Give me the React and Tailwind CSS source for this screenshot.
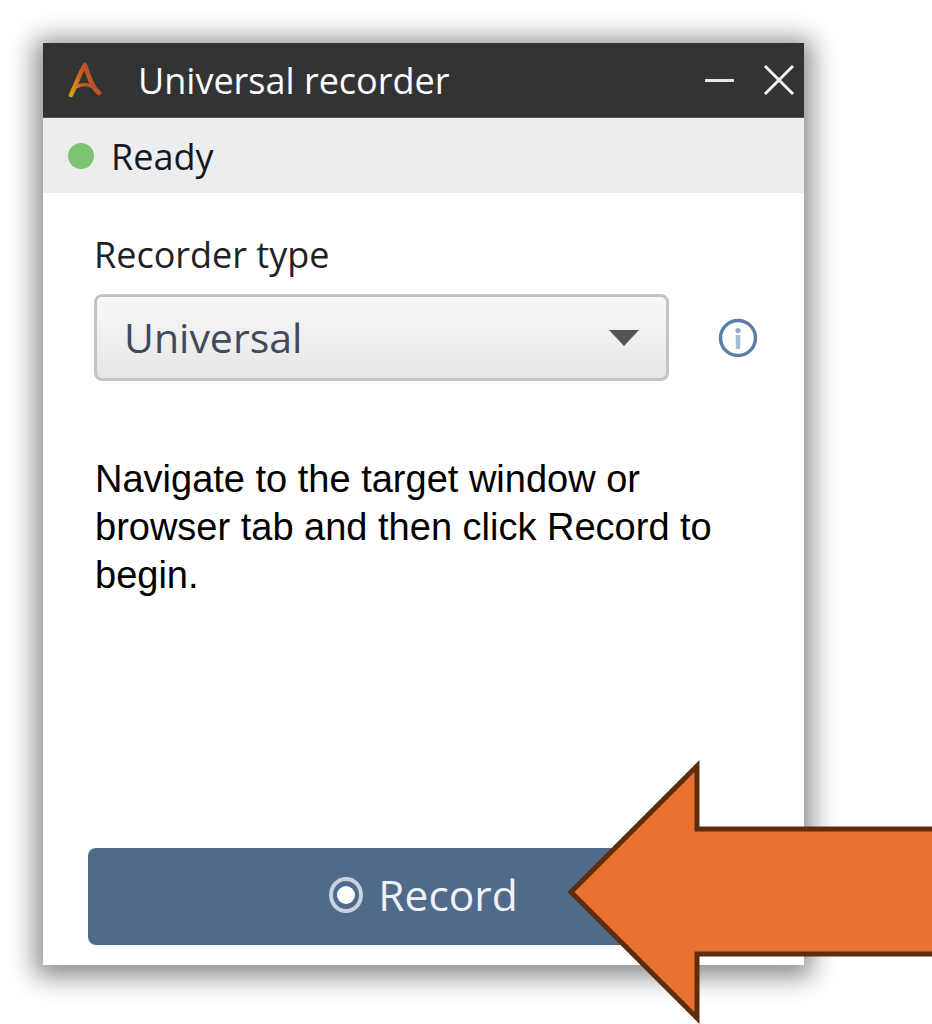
export default function App() {
  return (
    <div className="relative w-[932px] h-[1024px] bg-white overflow-hidden" style={{ fontFamily: '"Open Sans", "Noto Sans", sans-serif' }}>
      <div className="pt-[43px] pl-[43px]">
        <div className="w-[761px] h-[922px] flex flex-col bg-white shadow-[0_4px_24px_8px_rgba(0,0,0,0.45)]">
          <div className="h-[75px] shrink-0 bg-[#333333] flex items-center pl-[25px] pr-[9px] border-b border-[#555555]">
            <svg width="36" height="36" viewBox="0 0 36 36" className="shrink-0" fill="none" strokeLinecap="round" strokeLinejoin="round">
              <defs>
                <linearGradient id="logoGrad" x1="0" y1="1" x2="1" y2="0.5">
                  <stop offset="0" stopColor="#d9a11a" />
                  <stop offset="0.5" stopColor="#c8651e" />
                  <stop offset="1" stopColor="#b8472a" />
                </linearGradient>
              </defs>
              <path d="M3 33C8 23 12 10 17 3C20 12 24 26 31 31" stroke="url(#logoGrad)" strokeWidth="4.5" />
              <path d="M8 25C15 21 23 22 30 29" stroke="url(#logoGrad)" strokeWidth="3.5" />
            </svg>
            <span className="ml-[34px] pt-[2px] text-[36px] leading-none text-white">Universal recorder</span>
            <div className="ml-auto flex items-center gap-[29px]">
              <div className="w-[29px] h-[3px] bg-[#e4e4e4]" />
              <svg width="32" height="32" viewBox="0 0 32 32" stroke="#f2f2f2" strokeWidth="3">
                <path d="M2 2L30 30M30 2L2 30" />
              </svg>
            </div>
          </div>
          <div className="h-[75px] shrink-0 bg-[#ededed] flex items-center pl-[25px]">
            <div className="w-[26px] h-[26px] rounded-full bg-[#7dc473]" />
            <span className="ml-[17px] pt-[3px] text-[36px] leading-none text-[#111827]">Ready</span>
          </div>
          <div className="flex-1 flex flex-col px-[52px] pt-[40px]">
            <div className="-ml-px text-[36px] leading-[44px] text-[#222222]">Recorder type</div>
            <div className="mt-[17px] flex items-center">
              <div className="w-[575px] h-[87px] -ml-px shrink-0 rounded-[8px] border-[3px] border-[#c4c4c4] bg-gradient-to-b from-[#f8f8f8] to-[#e6e6e6] flex items-center pl-[27px] pr-[27px]">
                <span className="text-[41px] leading-none text-[#3f4a5a]">Universal</span>
                <div className="ml-auto w-0 h-0 border-l-[15px] border-r-[15px] border-t-[16px] border-l-transparent border-r-transparent border-t-[#555555]" />
              </div>
              <svg className="ml-[49px] shrink-0" width="40" height="40" viewBox="0 0 40 40" fill="none">
                <circle cx="20" cy="20" r="17.5" stroke="#5d7fa5" strokeWidth="3.5" />
                <circle cx="20" cy="12.5" r="2.5" fill="#8fa6c0" />
                <rect x="17.8" y="17" width="4.4" height="14" fill="#a9bbcf" />
              </svg>
            </div>
            <p className="mt-[74px] w-[640px] text-[38px] leading-[48px] text-black" style={{ fontFamily: '"Liberation Sans", sans-serif' }}>
              Navigate to the target window or browser tab and then click Record to begin.
            </p>
            <div className="mt-auto mb-[20px] -ml-[7px] w-[680px] h-[97px] rounded-[8px] bg-[#4f6a8b] flex items-center justify-center">
              <div className="flex items-center mr-[10px] mb-[3px]">
                <svg width="36" height="40" viewBox="0 0 36 40" fill="none">
                  <ellipse cx="18" cy="20" rx="15" ry="16" stroke="#c9d3de" strokeWidth="4" />
                  <circle cx="18" cy="20" r="9" fill="#ffffff" />
                </svg>
                <span className="ml-[14px] text-[42.5px] leading-none text-[#eef2f6]">Record</span>
              </div>
            </div>
          </div>
        </div>
      </div>
      <svg className="absolute left-0 top-0 pointer-events-none" width="932" height="1024" viewBox="0 0 932 1024">
        <path d="M571 892L697 766V829H940V954H697V1018Z" fill="#e97132" stroke="#5f2c0e" strokeWidth="5" />
      </svg>
    </div>
  );
}
